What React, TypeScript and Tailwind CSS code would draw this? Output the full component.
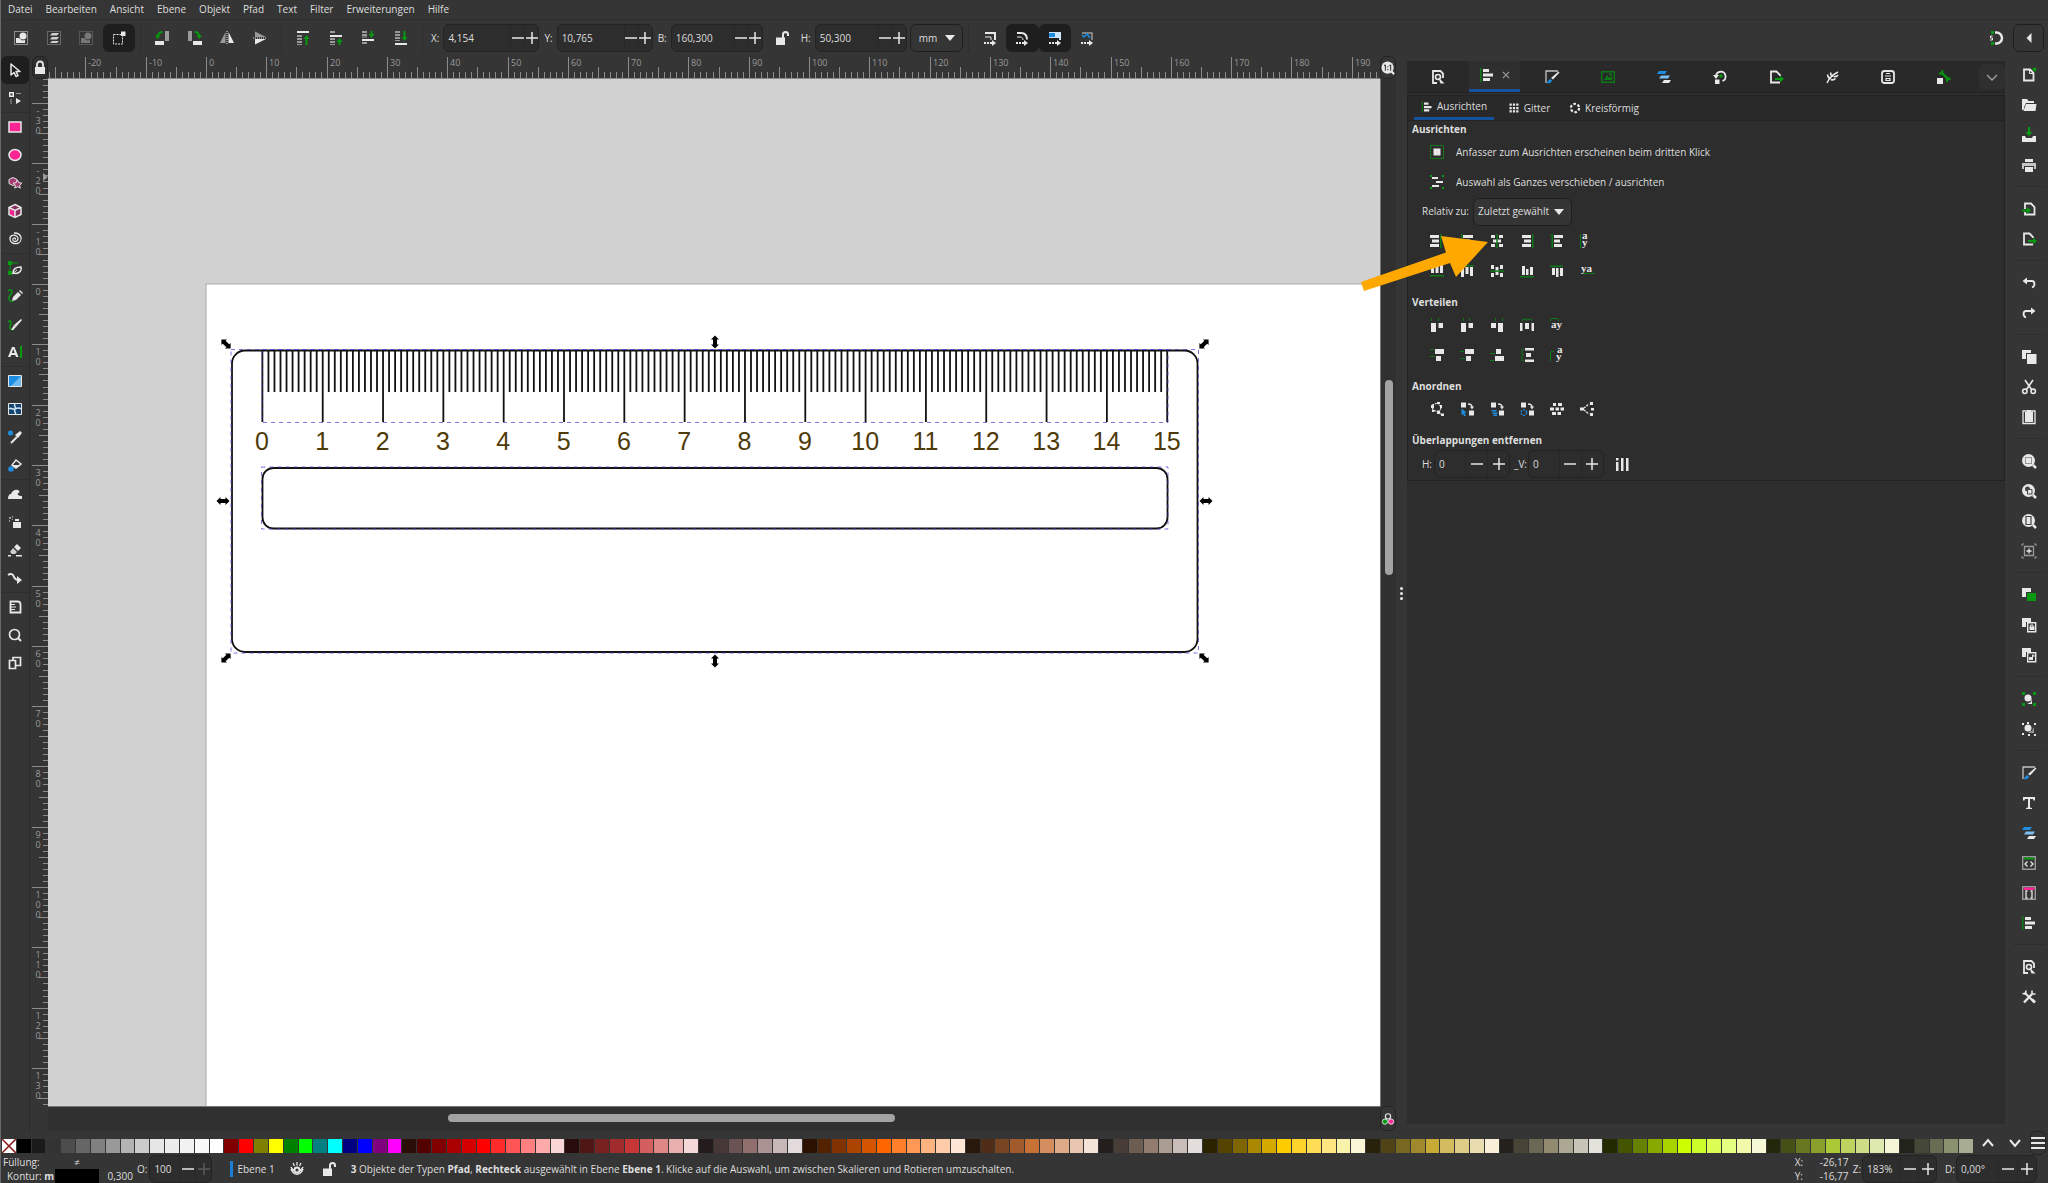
import type { ReactNode } from 'react'
import clsx from 'clsx'

const W = '#e8e8e8'
const G = '#079a10'
const D = '#0b7a16'
const B = '#1c8de0'
const M = '#9a9a9a'
const P = '#ff2494'

const F = ({ d, c = W }: { d: string; c?: string }) => <path d={d} fill={c} fillRule="evenodd" />
const S = ({ d, c = W, w = 1.5, dash }: { d: string; c?: string; w?: number; dash?: string }) => (
  <path d={d} fill="none" stroke={c} strokeWidth={w} strokeDasharray={dash} />
)

const icons: Record<string, ReactNode> = {
  selectAll: <><S d="M1.5 1.5h13v13h-13z" w={1} dash="1 1" /><circle cx="10" cy="6" r="3.5" fill={W} /><F d="M3 8h3l3 2.5 3-.5v3H3z" /></>,
  selectLayers: <><S d="M1.5 1.5h13v13h-13z" c={M} w={1} dash="1 1" /><F d="M6 3h7l-2 2.5H4zM6 7h7l-2 2.5H4zM6 11h7l-2 2H4z" c="#d0d0d0" /></>,
  deselect: <><S d="M1.5 1.5h13v13h-13z" c="#777" w={1} dash="1 1" /><circle cx="10" cy="6" r="3.5" fill="#777" /><F d="M3 8h3l3 2.5 3-.5v3H3z" c="#777" /></>,
  touchSelect: <><S d="M2.5 4.5h9v9.5h-9z" w={1} dash="2 1" /><F d="M10 1.5h4.5V6H10z" /></>,
  rotateLeft: <><F d="M1 11h9v4H1z" /><F d="M11 1h4v10h-4z" c={M} /><S d="M8.5 2C5 2 4 4 3.5 7" c={G} w={2} /><F d="M1 5.5h5.5L3.5 9z" c={G} /></>,
  rotateRight: <><F d="M6 11h9v4H6z" /><F d="M1 1h4v10H1z" c={M} /><S d="M7.5 2C11 2 12 4 12.5 7" c={G} w={2} /><F d="M9.5 5.5H15L12.5 9z" c={G} /></>,
  flipH: <><F d="M6.5 2v11H1z" c={M} /><F d="M9.5 2v11H15z" /><S d="M8 1v14" w={1} dash="1 1" /></>,
  flipV: <><F d="M3 1.5v5.5h11z" c={M} /><F d="M3 14.5V9h11z" /><S d="M1 8h14" w={1} dash="1 1" /></>,
  raiseTop: <><F d="M2 1h12v2H2z" /><F d="M2 5h5v2H2zM2 8h5v2H2zM2 11h5v2H2zM2 14h5v1H2z" c={M} /><F d="M10.5 15V9h-2l3-4 3 4h-2v6z" c={G} /></>,
  raise: <><F d="M2 5h12v2H2z" /><F d="M2 1h5v2H2zM2 8h5v2H2zM2 11h5v2H2zM2 14h5v1H2z" c={M} /><F d="M10.5 15v-3h-2l3-4 3 4h-2v3z" c={G} /></>,
  lower: <><F d="M2 9h12v2H2z" /><F d="M2 1h5v2H2zM2 4h5v2H2zM2 6.5h5v1H2zM2 12h5v2H2z" c={M} /><F d="M10.5 1v3h-2l3 4 3-4h-2V1z" c={G} /></>,
  lowerBottom: <><F d="M2 13h12v2H2z" /><F d="M2 1h5v2H2zM2 4h5v2H2zM2 7h5v2H2zM2 10h5v1H2z" c={M} /><F d="M10.5 1v6h-2l3 4 3-4h-2V1z" c={G} /></>,
  unlock: <><F d="M2 7.5h9V15H2z" /><S d="M9 8V4.5a2.5 2.5 0 0 1 5 0V6" w={2} /></>,
  lock: <><F d="M3 7h10v7H3z" /><S d="M5 8V4.5a3 3 0 0 1 6 0V8" w={1.8} /></>,
  scaleStroke: <><F d="M3 2h11v8h-2V4H3z" /><S d="M3 7h6v3" w={1} /><S d="M2 13h8" w={2} dash="2 1" /><F d="M10 10l4 3-4 3z" /></>,
  scaleCorner: <><S d="M3 3h4c4 0 6 2 6 6.5" w={2} /><S d="M3 7h3c2 0 3 1 3 3" w={1} /><S d="M2 13h8" w={2} dash="2 1" /><F d="M10 10l4 3-4 3z" /></>,
  scaleGradient: <><F d="M2 2h12v8h-2V8H2z" c="#cfe6fa" /><F d="M2 3h6v4H2z" c={B} /><S d="M2 13h8" w={2} dash="2 1" /><F d="M10 10l4 3-4 3z" /></>,
  scalePattern: <><S d="M3 3h10v7" c={M} /><S d="M3 5l2 2 3-3 3 4" c={B} /><S d="M2 13h8" w={2} dash="2 1" /><F d="M10 10l4 3-4 3z" /></>,
  snap: <><S d="M7 2.5h1.5a5.5 5.5 0 0 1 0 11H7" w={2.5} /><F d="M3 1h3v3H3zM3 12h3v3H3z" c={G} /><S d="M4.5 6h-2v2h2v2H2" w={1} /></>,
  back: <F d="M10.5 3v10l-5-5z" />,
  arrow: <path d="M4 2v11l3-2.500 2 4 2-1-2-4h4z" fill="none" stroke={W} strokeWidth="1.5" strokeLinejoin="round" />,
  node: <><F d="M2 2h5v5H2z" /><F d="M9 3h5v1H9zM3.5 9h1v5h-1z" c={M} /><F d="M9 8v6l5-3z" /><F d="M3.5 3.5h2v2h-2z" c="#353535" /></>,
  rect: <path d="M2 3h12v10H2z" fill={P} stroke={W} strokeWidth="1.5" />,
  ellipse: <ellipse cx="8" cy="8" rx="6" ry="5.5" fill={P} stroke={W} strokeWidth="1.5" />,
  star: <><path d="M6 2.5l4 2v4l-4 2-4-2v-4z" fill="#a33a70" stroke={W} /><path d="M10.5 5l1.3 2.7 3 .4-2.1 2 .5 3-2.7-1.4-2.7 1.4.5-3-2.1-2 3-.4z" fill="#a33a70" stroke={W} /></>,
  cube: <><path d="M8 1.5l6 3v7l-6 3-6-3v-7z" fill="#8a2f60" stroke={W} strokeWidth="1.5" /><F d="M3 6l4.5 2v5.5L3 11z" c={P} /><S d="M2 4.5l6 3 6-3M8 7.5v7" /></>,
  spiral: <S d="M8 8.5c1-.8 0-2-1.2-1.5-2 .8-1 3.7 1.500 3.500 3-.2 3.700-4 1.200-5.500C6 3 2.5 5 3 8.500c.5 3 3.500 4.700 7 4 3-.7 4.500-3.500 4-6C13.300 3.500 10.500 2 7 2" w={1.3} />,
  pen: <><F d="M1 1h4v4H1zM1 11h4v4H1z" c={G} /><S d="M3 5v6M5 3h6" c={G} w={1} /><path d="M6 13c0-4 3-6 8-6 1 3-1 6-5 6.5z" fill="none" stroke={W} strokeWidth="1.5" /><S d="M5 14l5-4" w={1} /></>,
  pencil: <><S d="M1 3c2-2 4-1 4 1s-3 3-3 6 2 4 4 3" c={G} /><F d="M5 13l1-4 5-5 3 3-5 5z" /><F d="M12 3l1-1 3 3-1 1z" /></>,
  brush: <><S d="M1 6c2-2 3-1 3 1s-2 3-1 5 3 2 4 1" c={G} /><F d="M14 3l1 1-6 7-2-2z" /><F d="M7 9l2 2-3 3H4z" /></>,
  text: <><F d="M1 13l4-10h2.5l4 10H9l-.8-2h-4l-.8 2zM4.9 9h2.700L6.200 5z" /><F d="M13 2h2v12h-2z" c={G} /></>,
  gradient: <><path d="M1.5 2.5h13v11h-13z" fill={B} stroke={W} /><F d="M14 3v10H4z" c="#6fb9f0" /></>,
  mesh: <><path d="M1.5 2.5h13v11h-13z" fill="#14446e" stroke={W} /><S d="M8 3c-2 2 2 3 0 5s2 4 0 5M2 8c2-2 4 1 6 0s4-2 6 0" c="#cfe6fa" /></>,
  dropper: <><circle cx="3.5" cy="4" r="2.5" fill={B} /><S d="M4 14l6-6" w={2} /><F d="M8 6l5-4 2 2-4 5z" /></>,
  bucket: <><circle cx="4" cy="12" r="2.8" fill={B} /><path d="M9 3l5 4-5 4-4-3z" fill="none" stroke={W} strokeWidth="1.5" /><F d="M5 8h9l-5 3z" /></>,
  tweak: <F d="M1 13c0-3 1-5 3-5 1-3 4-5 7-4 2 1 2 3 0 3-1 2 1 3 4 3v3z" />,
  spray: <><F d="M6 8h8v6H6zM8 5h4v2H8z" /><F d="M2 3h2v2H2zM5 2h1v2H5zM2 6h1v2H2zM5 5h1v1H5z" c={M} /></>,
  eraser: <><F d="M10 2l4 4-3 3-4-4z" /><F d="M6 6l4 4-2 2H5l-2-2z" c="#cfcfcf" /><F d="M1 13h3v1.500H1zM9 13h6v1.500H9z" /></>,
  connector: <><S d="M1 5c3-2 5-1 6 2s3 3 5 3" w={2} /><F d="M10 6l5 4-5 4z" /></>,
  measure: <><path d="M3.5 2.5h7c2 0 3 1 3 3v8h-10z" fill="none" stroke={W} strokeWidth="1.8" /><S d="M4 5.5h4M4 8h5M4 10.5h4" w={1.2} /></>,
  zoom: <><circle cx="7.5" cy="7.5" r="5" fill="none" stroke={W} strokeWidth="1.7" /><S d="M11 11l3 3" w={2} /></>,
  pages: <><path d="M2.5 5.5h6v8h-6z" fill="none" stroke={W} strokeWidth="1.7" /><S d="M6 5V2.5h7.5v8H9" w={1.7} /></>,
  docNew: <><path d="M3 2.5h6L12.5 6v7.5H3z" fill="none" stroke={W} strokeWidth="1.8" /><S d="M8.5 3v3.5H12" w={1} /><circle cx="13.5" cy="2.5" r="2" fill={G} /></>,
  open: <F d="M1 2h5l1.5 2H13v2H5L3.5 9l-1 4H1zM5 7h10.5l-1 7h-12z" />,
  save: <><F d="M1 9h3l1 2h6l1-2h3v6H1z" /><S d="M8 0v7" c={G} w={2} /><F d="M4.5 5h7L8 9z" c={G} /></>,
  print: <><F d="M4 2h8v3H4z" /><F d="M1 6h14v6h-2V9H3v3H1z" c="#c4c4c4" /><F d="M4 10h8v5H4z" /></>,
  docImport: <><path d="M4 8V2.5h6L13.5 6v7.5H4V11" fill="none" stroke={W} strokeWidth="1.8" /><S d="M1 9.5h6" c={G} w={2} /><F d="M6 6l4 3.5L6 13z" c={G} /></>,
  docExport: <><path d="M12 7V6L8.5 2.5H3v11h9" fill="none" stroke={W} strokeWidth="1.8" /><S d="M7 10h6" c={G} w={2} /><F d="M12 6.5l4 3.5-4 3.5z" c={G} /></>,
  undo: <><S d="M5 6h6c3 0 3.5 5 0 6.5" w={1.8} /><F d="M6 2.5v7L1.5 6z" /></>,
  redo: <><S d="M11 6H5c-3 0-3.5 5 0 6.5" w={1.8} /><F d="M10 2.5v7L14.5 6z" /></>,
  duplicate: <><F d="M1 1h9v3H5v6H1z" /><F d="M6 5h9.5v10H6z" /></>,
  cut: <><S d="M4 1l6.5 9.5M12 1l-6.5 9.5" w={1.6} /><circle cx="3.8" cy="12.3" r="2.2" fill="none" stroke={W} strokeWidth="1.6" /><circle cx="12.2" cy="12.3" r="2.2" fill="none" stroke={W} strokeWidth="1.6" /></>,
  paste: <><S d="M2 2h12v12.5H2z" w={1.3} /><F d="M6 1h4v2h2v10H4V3h2z" /></>,
  zoomSel: <><circle cx="7.5" cy="7.5" r="6.5" fill={W} /><S d="M12 12l3 3" w={2.5} /><S d="M4.5 4.5h6v6h-6z" c="#444" w={1} dash="1 1" /></>,
  zoomDraw: <><circle cx="7.5" cy="7.5" r="6.5" fill={W} /><S d="M12 12l3 3" w={2.5} /><circle cx="6.5" cy="6" r="2.5" fill="#444" /><path d="M6.5 6.5H11V11H6.500z" fill={W} stroke="#444" /></>,
  zoomPage: <><circle cx="7.5" cy="7.5" r="6.5" fill={W} /><S d="M12 12l3 3" w={2.5} /><S d="M5 3.5h5v8H5z" c="#444" w={1.2} /></>,
  zoomCenter: <><S d="M3.5 3.5h9v9h-9z" c={M} w={1.3} /><S d="M1 3V1h2M13 1h2v2M15 13v2h-2M3 15H1v-2" c={M} w={1} /><S d="M8 5.5v5M5.5 8h5" w={1.3} /></>,
  dupGreen: <><F d="M1 1h9v4H5v5H1z" /><F d="M6 6h9v8H6z" c={G} /></>,
  cloneLock: <><F d="M1 1h9v4H5v5H1z" /><path d="M6.7 5.7h8v9h-8z" fill="#353535" stroke={W} strokeWidth="1.4" /><F d="M8.5 9.500h5V13h-5z" /><S d="M9.5 10V8H12v2" w={1} /></>,
  cloneUnlock: <><F d="M1 1h9v4H5v5H1z" /><path d="M6.7 5.7h8v9h-8z" fill="#353535" stroke={W} strokeWidth="1.4" /><F d="M8 10h4v3H8z" /><S d="M11.5 10V8H13v2" w={1} /></>,
  group: <><F d="M1 1h3v3H1zM12 1h3v3h-3zM1 12h3v3H1zM12 12h3v3h-3z" c={G} /><circle cx="7" cy="7" r="3.5" fill={W} /><F d="M11 7v6H6l4-2z" /></>,
  ungroup: <><F d="M1 2h2v2H1zM6 1h2v2H6zM13 2h2v2h-2zM1 12h2v2H1zM7 13h2v2H7zM13 13h2v2h-2z" /><circle cx="7" cy="7" r="3.5" fill={W} /><F d="M13 6v6H9l-2-1 4-1z" c={M} /></>,
  fillStroke: <><S d="M2 14V2h12" w={1.3} c="#c4c4c4" /><F d="M14.5 2.5l1 1-6.500 7L7 9z" /><F d="M6 10l2 1.5c-1 3-3 3-5.500 2.500C4 13 4 11 6 10z" c={B} /></>,
  bigT: <F d="M2 2h12v3.5h-1.5L12 4H9v8.500l2 .5v1H5v-1l2-.5V4H4l-.5 1.5H2z" />,
  layers: <><F d="M3 2h8L9 5H1z" c={B} /><F d="M5 6.5h9l-2 3H3z" c="#7fc0f2" /><F d="M8 11h7l-2 3H6z" /></>,
  xml: <><path d="M1.7 1.7h12.6v12.6H1.7z" fill="none" stroke={M} strokeWidth="1.4" /><F d="M3 2.5h10v2H3z" c={G} /><S d="M6.5 6.5L4 9l2.5 2.5M9.5 6.5L12 9l-2.500 2.500" w={1.3} /></>,
  selectors: <><path d="M1.7 1.7h12.6v12.6H1.7z" fill="none" stroke={M} strokeWidth="1.4" /><F d="M2.5 2.5h11V5h-11z" c={P} /><S d="M6.5 6H5v7h1.5M9.5 6H11v7H9.500" w={1.3} /></>,
  align: <><F d="M1 1h1.5v14H1z" c={D} /><F d="M4 2h6v3H4zM4 6.5h10v3H4zM4 11h7v3H4z" /></>,
  docProps: <><path d="M13 9V4.5L10.5 2H3v12h4" fill="none" stroke={W} strokeWidth="1.8" /><circle cx="8" cy="8" r="2.5" fill="none" stroke={W} strokeWidth="1.6" /><F d="M8 8l6.5 6.5h-4z" /></>,
  prefs: <><S d="M3.5 3.5L13 13" w={2} /><S d="M11 5l-8 8.5" w={2.4} /><S d="M1.500 4.5l3 .5L5 1.5M14.500 5H11V1.5" w={1.6} /><F d="M10 11l2-1.5 3 3-2 2z" /></>,
  image: <><path d="M1.7 2.7h12.6v10.6H1.7z" fill="none" stroke={D} strokeWidth="1.4" /><F d="M4 11l3-5 2 3 3-2v4z" c={D} /><circle cx="10.5" cy="5.5" r="1.2" fill={D} /></>,
  transform: <><S d="M4 8V7a4.8 4.8 0 1 1 6.5 5" w={1.8} /><F d="M1 6h6l-3 4z" /><F d="M3 10.5h4.5V15H3z" /><F d="M7.5 5.5h3v3h-3z" c={G} /></>,
  symbols: <><S d="M3 14c2-5 5-8 11-11" w={1.4} /><S d="M3.5 5.5c.5 3 1.5 4 3.5 4M6.500 3.500c.5 3 1 4 3 3.500M7 10.500c2 1 3 .5 4.500-1M10 7.500c2 .5 3 0 4-1.500" w={1.6} /></>,
  preview: <><rect x="2" y="2" width="12" height="12" rx="2.5" fill="none" stroke={W} strokeWidth="1.8" /><S d="M6 4.5h4M5 7h6M6 9.5h4v2H6z" w={1.2} /></>,
  objProps: <><F d="M1 9h6v6H1z" /><S d="M5.5 3.5l6 6 3 .5" c={G} w={2.4} /><S d="M3 4.5h3L6.500 1M11 13V9.5" c={G} w={1.8} /></>,
  gridIcon: <F d="M2 2h3v3H2zM6.5 2h3v3h-3zM11 2h3v3h-3zM2 6.5h3v3H2zM6.5 6.5h3v3h-3zM11 6.5h3v3h-3zM2 11h3v3H2zM6.5 11h3v3h-3zM11 11h3v3h-3z" />,
  circular: <circle cx="8" cy="8" r="5.5" fill="none" stroke={W} strokeWidth="3" strokeDasharray="3.5 2.26" />,
  handles: <><S d="M1.5 1.5h13v13h-13z" c={G} w={1} dash="2 1" /><F d="M4.5 4.5h7v7h-7z" /></>,
  moveGroup: <><F d="M1 1h2v2H1zM13 1h2v2h-2zM1 13h2v2H1zM13 13h2v2h-2z" c={G} /><F d="M3 3h6v2H3zM7 7h7v2H7zM3 11h7v2H3z" /></>,
  aR: <><F d="M1 2h9v3H1zM3 6.5h7v3H3zM1 11h9v3H1z" /><F d="M11 1h1.5v14H11z" c={D} /></>,
  aL: <><F d="M4 2h10v3H4zM4 6.5h7v3H4zM4 11h9v3H4z" /><F d="M2 1h1.5v14H2z" c={D} /></>,
  aC: <><F d="M2 2h4v3H2zM10 2h4v3h-4zM4 6.5h8v3H4zM2 11h4v3H2zM10 11h4v3h-4z" /><F d="M7.3 1h1.5v14H7.3z" c={D} /></>,
  aRin: <><F d="M3 2h9v3H3zM5 6.5h7v3H5zM3 11h9v3H3z" /><F d="M13 1h1.5v14H13z" c={D} /></>,
  aLout: <><F d="M5 2h9v3H5zM5 6.5h6v3H5zM5 11h8v3H5z" /><F d="M2.5 1H4v14H2.5zM1 2h1v1H1z" c={D} /></>,
  bR: <><F d="M2 1v9h3V1zM6.5 3v7h3V3zM11 1v9h3V1z" /><F d="M1 12h14v1.5H1z" c={D} /></>,
  bL: <><F d="M2 4v10h3V4zM6.5 4v7h3V4zM11 4v9h3V4z" /><F d="M1 2h14v1.5H1z" c={D} /></>,
  bC: <><F d="M2 2h3v4H2zM11 2h3v4h-3zM6.5 4h3v8h-3zM2 10h3v4H2zM11 10h3v4h-3z" /><F d="M1 7.3h14v1.5H1z" c={D} /></>,
  bRin: <><F d="M3 3v9h3V3zM7 6v6h2.5V6zM11 4v8h3V4z" /><F d="M1 13h14v1.5H1z" c={D} /></>,
  bLout: <><F d="M3 5v7h3V5zM7 5v9h2.5V5zM11 5v8h3V5z" /><F d="M1 2.5h13V4H1z" c={D} /></>,
  dL: <><F d="M2 6h5v9H2zM9.5 6H14v5H9.5z" /><F d="M2 1h1v3H2zM9 1h1v3H9z" c={D} /></>,
  dC: <><F d="M2 6h5v9H2zM9.5 6H14v5H9.5z" /><F d="M4 1h1v3H4zM10 1h1v3h-1z" c={D} /></>,
  dR: <><F d="M2 6h5v5H2zM9 6h5v9H9z" /><F d="M6 1h1v3H6zM13 1h1v3h-1z" c={D} /></>,
  dG: <><F d="M1 6h2.5v8H1zM6 6h4v6H6zM12.5 6H15v8h-2.5z" /><F d="M3 2h10v1H3zM3 1h1v3H3zM7 1h1v3H7zM12 1h1v3h-1z" c={D} /></>,
  eL: <><F d="M6 2h9v5H6zM7 9h5v5H7z" /><F d="M1 2h4v1H1zM1 9h5v1H1z" c={D} /></>,
  eC: <><F d="M6 2h9v5H6zM7 9h5v5H7z" /><F d="M1 4h4v1H1zM1 11h5v1H1z" c={D} /></>,
  eR: <><F d="M7 2h5v5H7zM6 9h9v5H6z" /><F d="M1 6h5v1H1zM1 13h4v1H1z" c={D} /></>,
  eG: <><F d="M6 1h9v2.5H6zM7 6h5v4H7zM6 12.5h9V15H6z" /><F d="M2.5 2h1v12h-1zM2 2h3v1H2zM2 7h3v1H2zM2 13h3v1H2z" c={D} /></>,
  graph: <><S d="M3 4l6-2 3 4-1 4M3 4l1 5 5 2 4 3" w={1.2} dash="2 1" /><F d="M2 4h3v3H2zM8 1h3v2H8zM11 4h2v3h-2zM3 9h2v2H3zM8 9.5h3V13H8zM12 12.5h3V15h-3z" /></>,
  swap1: <><F d="M2 1.5h5v5H2zM10 9.5h5v5h-5z" /><S d="M9 3c3 0 4 1 4 3" w={1.3} /><F d="M11 5.5h4l-2 3z" /><F d="M2.5 7.5l5 4-2 .5L7 15H5l-1-2-1.5 1z" c={B} /></>,
  swap2: <><F d="M2 1.5h5v5H2zM10 9.5h5v5h-5z" /><S d="M9 3c3 0 4 1 4 3" w={1.3} /><F d="M11 5.5h4l-2 3z" /><F d="M3 9h5l-1 1.5H2zM4 11.5h5L8 13H3zM5 13.5h3V15H4z" c={B} /></>,
  swap3: <><F d="M2 1.5h5v5H2zM10 9.5h5v5h-5z" /><S d="M9 3c3 0 4 1 4 3" w={1.3} /><F d="M11 5.5h4l-2 3z" /><circle cx="4.8" cy="11.5" r="2.8" fill="none" stroke={B} strokeWidth="1.3" strokeDasharray="2 1" /></>,
  random: <F d="M4 2h3v3H4zM9 2h4v3H9zM1 6.5h4v3H1zM6.5 6.5H10v3H6.5zM11.5 6.5H15v3h-3.5zM3 11h4v3H3zM8.5 11H12v3H8.5z" />,
  unclump: <><F d="M1 6.5h4v3H1zM11 1h3v3h-3zM12 7h3v2.5h-3zM11 12h3v3h-3z" /><S d="M5 7l5-4M5 9l5 4" w={1.3} dash="2 1" /></>,
  bars: <F d="M2 2h2.5v2.5H2zM2 6h2.5v9H2zM7 2h2.5v13H7zM12 2h2.5v13H12z" />,
  eye: <><path d="M2 6c3 6 9 6 12 0M2 8c3 7 9 7 12 0" fill="none" stroke={W} strokeWidth="1.5" /><circle cx="8" cy="9" r="2.5" fill="#353535" stroke={W} strokeWidth="1.8" /><S d="M4 2l1.5 3M12 2l-1.500 3M8 1v3.5" w={1.3} /></>,
  oneToOne: <><circle cx="7.5" cy="7.5" r="7" fill={W} /><S d="M12 12l3 3" w={2.5} /><S d="M3.5 5H5v6M9.5 5H11v6M7.8 6v1.5M7.8 9v1.5" c="#333" w={1.2} /></>,
  colorManage: <><circle cx="8" cy="5" r="3" fill="none" stroke={W} strokeWidth="1.3" /><circle cx="4.5" cy="11" r="3" fill={G} stroke={W} /><circle cx="11.5" cy="11" r="3" fill={P} stroke={W} /></>,
  up: <S d="M3 11l5-6 5 6" w={2} />,
  down: <S d="M3 5l5 6 5-6" w={2} />,
  downThin: <S d="M3 6l5 5 5-5" c={M} />,
  menu: <F d="M1 2h14v2H1zM1 7h14v2H1zM1 12h14v2H1z" />,
  close: <S d="M3 3l10 10M13 3L3 13" c={M} w={2} />,
}

const Icon = ({ name, className = 'size-4' }: { name: string; className?: string }) => (
  <svg viewBox="0 0 16 16" className={clsx('shrink-0', className)} aria-hidden="true">
    {icons[name]}
  </svg>
)

const IconButton = ({ icon, active, className }: { icon: string; active?: boolean; className?: string }) => (
  <button
    type="button"
    aria-label={icon}
    className={clsx('flex items-center justify-center rounded-md', active && 'bg-[#1e1e1e]', className)}
  >
    <Icon name={icon} />
  </button>
)

type SpinProps = {
  id: string
  label: string
  value: string
  width: string
  cell?: string
  gap?: string
  plusOff?: boolean
}

const Spin = ({ id, label, value, width, cell = 'w-3.5', gap = 'gap-1', plusOff }: SpinProps) => (
  <div className={clsx('flex items-center', gap)}>
    <label htmlFor={id}>{label}</label>
    <div className={clsx('flex h-7 items-stretch rounded-md border border-[#232323] bg-[#2d2d2d]', width)}>
      <input id={id} defaultValue={value} className="w-0 flex-1 bg-transparent pl-1 outline-none" />
      <button type="button" aria-label={`${label} -`} className={clsx('flex items-center justify-center border-l border-[#282828]', cell)}>
        <svg viewBox="0 0 14 14" className="size-3.5 shrink-0"><S d="M1 7h12" /></svg>
      </button>
      <button type="button" aria-label={`${label} +`} className={clsx('flex items-center justify-center border-l border-[#282828]', cell)}>
        <svg viewBox="0 0 14 14" className="size-3.5 shrink-0"><S d="M1 7h12M7 1v12" c={plusOff ? '#5a5a5a' : W} /></svg>
      </button>
    </div>
  </div>
)

const Select = ({ id, value, className }: { id: string; value: string; className: string }) => (
  <div className="relative">
    <select id={id} aria-label={value} defaultValue={value} className={clsx('h-7 appearance-none rounded-md border border-[#1f1f1f] bg-[#353535] outline-none', className)}>
      <option>{value}</option>
    </select>
    <svg viewBox="0 0 10 6" className="pointer-events-none absolute top-[11px] right-2 h-1.5 w-2.5"><F d="M0 0h10L5 6z" /></svg>
  </div>
)

const menus = ['Datei', 'Bearbeiten', 'Ansicht', 'Ebene', 'Objekt', 'Pfad', 'Text', 'Filter', 'Erweiterungen', 'Hilfe']

const toolGroups = [
  ['arrow', 'node'],
  ['rect', 'ellipse', 'star', 'cube', 'spiral'],
  ['pen', 'pencil', 'brush', 'text'],
  ['gradient', 'mesh', 'dropper', 'bucket'],
  ['tweak', 'spray', 'eraser', 'connector'],
  ['measure', 'zoom', 'pages'],
]

const commandGroups = [
  ['docNew', 'open', 'save', 'print'],
  ['docImport', 'docExport'],
  ['undo', 'redo'],
  ['duplicate', 'cut', 'paste'],
  ['zoomSel', 'zoomDraw', 'zoomPage', 'zoomCenter'],
  ['dupGreen', 'cloneLock', 'cloneUnlock'],
  ['group', 'ungroup'],
  ['fillStroke', 'bigT', 'layers', 'xml', 'selectors', 'align'],
  ['docProps', 'prefs'],
]

const palette = (
  '000000 1a1a1a 333333 4d4d4d 666666 808080 999999 b3b3b3 cccccc e6e6e6 ececec f2f2f2 f9f9f9 ffffff ' +
  '800000 ff0000 808000 ffff00 008000 00ff00 008080 00ffff 000080 0000ff 800080 ff00ff ' +
  '2b0d08 550000 800000 aa0000 d40000 ff0000 ff2a2a ff5555 ff8080 ffaaaa f9d5d5 ' +
  '280b0b 501616 782121 a02c2c c83737 d35f5f de8787 e9afaf f4d7d7 ' +
  '241c1c 483737 6c5353 916f6f ac9393 c8b7b7 e3dbdb ' +
  '2b1100 552200 803300 aa4400 d45500 ff6600 ff7f2a ff9955 ffb380 ffccaa ffe6d5 ' +
  '28170b 502d16 784421 a05a2c c87137 d38d5f deaa87 e9c6af f4e3d7 ' +
  '241f1c 483e37 6c5d53 917c6f ac9d93 c8beb7 e3dedb ' +
  '2b2200 554400 806600 aa8800 d4aa00 ffcc00 ffd42a ffdd55 ffe680 f9f2aa f9f6d5 ' +
  '28220b 504416 786721 a0892c c8ab37 d3bc5f decd87 e9ddaf f9eed7 ' +
  '24201c 484537 6c6753 918a6f aca793 c8c4b7 e3e2db ' +
  '222b00 445500 668000 88aa00 aad400 ccff00 ccff2a ddff55 e5ff80 f2f9aa f6f9d5 ' +
  '23280b 445016 677821 89a02c abc837 bcd35f cdde87 dde9af f4f6d7 ' +
  '22241c 454837 676c53 8a916f a7ac93'
).split(' ')

// one millimetre on screen, and the page corner inside the canvas
const MM = 6.03
const PAGE_X = 158
const PAGE_Y = 205

const range = (from: number, to: number) => Array.from({ length: to - from + 1 }, (_, i) => from + i)

const HRuler = () => (
  <svg className="h-full w-full">
    {range(-26, 260).map((n) => {
      const x = Math.round(PAGE_X + n * MM) + 0.5
      const top = n % 10 === 0 ? 1 : n % 5 === 0 ? 11 : 16
      return <path key={n} d={`M${x} ${top}V23`} stroke="#8c8c8c" />
    })}
    {range(-2, 19).map((n) => (
      <text key={n} x={Math.round(PAGE_X + n * 10 * MM) + 3} y="10" fill="#9a9a9a" className="text-[9px]">
        {n * 10}
      </text>
    ))}
    <path d="M0 22.5H4000" stroke="#8c8c8c" />
  </svg>
)

const VRuler = () => (
  <svg className="h-full w-full">
    {range(-34, 200).map((n) => {
      const y = Math.round(PAGE_Y + n * MM) + 0.5
      const left = n % 10 === 0 ? 2 : n % 5 === 0 ? 9 : 13
      return <path key={n} d={`M${left} ${y}H18`} stroke="#8c8c8c" />
    })}
    {range(-3, 13).map((n) =>
      String(n * 10).split('').map((ch, i) => (
        <text key={`${n}-${i}`} x="8" y={Math.round(PAGE_Y + n * 10 * MM) + 11 + i * 10} textAnchor="middle" fill="#9a9a9a" className="text-[9px]">
          {ch}
        </text>
      ))
    )}
    <F d="M13 94v8l5-4z" c={M} />
  </svg>
)

const DoubleArrow = ({ x, y, angle }: { x: number; y: number; angle: number }) => (
  <path transform={`translate(${x} ${y}) rotate(${angle})`} d="M-6.5 0l4-4v2h5v-2l4 4-4 4v-2h-5v2z" fill="#000" />
)

const Drawing = () => (
  <svg className="h-full w-full bg-[#d1d1d1]">
    <rect x={PAGE_X} y={PAGE_Y} width="1400" height="2000" fill="#fff" stroke="#a9a9a9" />
    <g fill="none" stroke="#111" strokeWidth="1.8">
      <rect x="184" y="271.5" width="965.5" height="301.5" rx="13" />
      <rect x="214.5" y="389" width="905" height="60.5" rx="11" />
      {range(0, 150).map((n) => (
        <path key={n} d={`M${214.4 + n * 6.032} 271V${n % 10 === 0 ? 343 : 313}`} />
      ))}
    </g>
    <g fill="none" stroke="#4a4ad8" strokeDasharray="4 4" opacity="0.75">
      <path d="M183 270.5h967.5V574H183zM214 270.5h906v73H214zM213.5 388H1120v62H213.5z" />
    </g>
    {range(0, 15).map((n) => (
      <text key={n} x={214 + n * 60.32} y="371" textAnchor="middle" fill="#4f3a0a" className="font-['Liberation_Sans',sans-serif] text-[25px]">
        {n}
      </text>
    ))}
    <DoubleArrow x={178} y={265} angle={45} />
    <DoubleArrow x={1156} y={265} angle={-45} />
    <DoubleArrow x={178} y={579} angle={-45} />
    <DoubleArrow x={1156} y={579} angle={45} />
    <DoubleArrow x={175} y={422} angle={0} />
    <DoubleArrow x={1158} y={422} angle={0} />
    <DoubleArrow x={667} y={263} angle={90} />
    <DoubleArrow x={667} y={582} angle={90} />
  </svg>
)

const IconRow = ({ names, glyph }: { names: string[]; glyph?: ReactNode }) => (
  <div className="flex pl-2.5">
    {names.map((name) => (
      <IconButton key={name} icon={name} className="h-[30px] w-[30px]" />
    ))}
    {glyph}
  </div>
)

const TextGlyph = ({ label, children }: { label: string; children: ReactNode }) => (
  <button type="button" aria-label={label} className="flex h-[30px] w-[30px] items-center justify-center">
    <svg viewBox="0 0 16 16" className="size-4 overflow-visible font-['Liberation_Serif',serif] text-[11px] font-bold" fill={W}>{children}</svg>
  </button>
)

const dockTabs = ['fillStroke', 'image', 'layers', 'transform', 'docExport', 'symbols', 'preview', 'objProps']

const Heading = ({ children }: { children: ReactNode }) => <h2 className="mt-2 h-4 leading-4 font-bold">{children}</h2>

const AlignPanel = () => (
  <section className="border border-[#222] bg-[#2d2d2d]">
    <div className="flex h-[25px] border-b border-[#232323] bg-[#292929] pl-1.5">
      <button type="button" className="flex w-20 items-center justify-center gap-1 border-b-3 border-[#15539e]"><Icon name="align" className="size-3" />Ausrichten</button>
      <button type="button" className="flex w-[70px] items-center justify-center gap-1"><Icon name="gridIcon" className="size-3" />Gitter</button>
      <button type="button" className="flex w-20 items-center justify-center gap-1"><Icon name="circular" className="size-3" />Kreisförmig</button>
    </div>
    <div className="pl-1">
      <h2 className="h-4 leading-4 font-bold">Ausrichten</h2>
      <button type="button" className="flex h-[30px] items-center gap-2.5 pl-4"><span className="w-[18px] pl-px"><Icon name="handles" /></span>Anfasser zum Ausrichten erscheinen beim dritten Klick</button>
      <button type="button" className="flex h-[30px] items-center gap-2.5 pl-4"><span className="w-[18px] pl-px"><Icon name="moveGroup" /></span>Auswahl als Ganzes verschieben / ausrichten</button>
      <div className="flex h-[29px] items-center gap-1 pl-2.5">
        <label htmlFor="relative">Relativ zu:</label>
        <Select id="relative" value="Zuletzt gewählt" className="w-[99px] pl-1" />
      </div>
      <IconRow names={['aR', 'aL', 'aC', 'aRin', 'aLout']} glyph={<TextGlyph label="Textanker vertikal"><F d="M1 1h1v14H1z" c={D} /><text x="3" y="6">a</text><text x="3" y="13">y</text></TextGlyph>} />
      <IconRow names={['bR', 'bL', 'bC', 'bRin', 'bLout']} glyph={<TextGlyph label="Textanker horizontal"><F d="M4 10h12v1H4z" c={D} /><text x="2" y="9">ya</text></TextGlyph>} />
      <Heading>Verteilen</Heading>
      <IconRow names={['dL', 'dC', 'dR', 'dG']} glyph={<TextGlyph label="Text verteilen horizontal"><F d="M1 1h9v1H1zM1 1h1v3H1zM9 1h1v3H9z" c={D} /><text x="2" y="11">ay</text></TextGlyph>} />
      <IconRow names={['eL', 'eC', 'eR', 'eG']} glyph={<TextGlyph label="Text verteilen vertikal"><F d="M1 4h1v10H1zM1 4h4v1H1z" c={D} /><text x="8" y="6">a</text><text x="7" y="13">y</text></TextGlyph>} />
      <Heading>Anordnen</Heading>
      <IconRow names={['graph', 'swap1', 'swap2', 'swap3', 'random', 'unclump']} />
      <Heading>Überlappungen entfernen</Heading>
      <div className="flex h-8 items-center gap-1 pl-2.5">
        <Spin id="gap-h" label="H:" value="0" width="w-[76px]" cell="w-[22px]" gap="gap-0.5" />
        <Spin id="gap-v" label="_V:" value="0" width="w-[76px]" cell="w-[22px]" gap="gap-px" />
        <IconButton icon="bars" className="h-8 w-7" />
      </div>
    </div>
  </section>
)

const Divider = () => <div className="mx-[5px] h-7 w-px bg-[#2e2e2e]" />

const App = () => (
  <div className="relative flex h-screen flex-col overflow-hidden border-l border-[#6a6a6a] bg-[#353535] font-['Open_Sans',sans-serif] text-[10px] text-[#dedede]">
    <nav className="flex h-5 shrink-0 items-center gap-[13px] border-b border-[#2e2e2e] pl-[7px]">
      {menus.map((m) => (
        <button type="button" key={m}>{m}</button>
      ))}
    </nav>

    <div className="flex h-9 shrink-0 items-center pl-1">
      <div className="flex w-[130px]">
        <IconButton icon="selectAll" className="h-7 flex-1" />
        <IconButton icon="selectLayers" className="h-7 flex-1" />
        <IconButton icon="deselect" className="h-7 flex-1" />
        <IconButton icon="touchSelect" active className="h-7 flex-1" />
      </div>
      <Divider />
      <div className="flex w-[130px]">
        {['rotateLeft', 'rotateRight', 'flipH', 'flipV'].map((n) => <IconButton key={n} icon={n} className="h-7 flex-1" />)}
      </div>
      <Divider />
      <div className="flex w-[130px]">
        {['raiseTop', 'raise', 'lower', 'lowerBottom'].map((n) => <IconButton key={n} icon={n} className="h-7 flex-1" />)}
      </div>
      <Divider />
      <div className="flex items-center gap-[5px] pl-[3px]">
        <Spin id="x" label="X:" value="4,154" width="w-24" />
        <Spin id="y" label="Y:" value="10,765" width="w-24" />
        <Spin id="b" label="B:" value="160,300" width="w-[92px]" />
        <IconButton icon="unlock" className="h-7 w-7" />
        <Spin id="h" label="H:" value="50,300" width="w-[92px]" />
      </div>
      <div className="pl-[3px]"><Select id="unit" value="mm" className="w-[53px] pl-2" /></div>
      <Divider />
      <div className="flex w-[130px]">
        <IconButton icon="scaleStroke" className="h-7 flex-1" />
        <IconButton icon="scaleCorner" active className="h-7 flex-1" />
        <IconButton icon="scaleGradient" active className="h-7 flex-1" />
        <IconButton icon="scalePattern" className="h-7 flex-1" />
      </div>
      <div className="ml-auto flex items-center pr-1">
        <IconButton icon="snap" className="h-7 w-[34px]" />
        <IconButton icon="back" className="h-7 w-[31px] border border-[#1f1f1f]" />
      </div>
    </div>

    <main className="flex min-h-0 flex-1">
      <aside className="flex w-[29px] shrink-0 flex-col border-r border-[#2a2a2a]">
        {toolGroups.map((group) => (
          <div key={group[0]} className="flex flex-col border-b border-[#2e2e2e] last:border-0">
            {group.map((name) => (
              <IconButton key={name} icon={name} active={name === 'arrow'} className="h-7 w-7" />
            ))}
          </div>
        ))}
      </aside>

      <div className="grid min-w-0 flex-1 grid-cols-[18px_minmax(0,1fr)_16px] grid-rows-[23px_minmax(0,1fr)_25px]">
        <div className="ml-0.5 flex items-center justify-center rounded-md border border-[#232323] bg-[#303030]"><Icon name="lock" className="size-4" /></div>
        <HRuler />
        <div className="flex items-center justify-center rounded-md border border-[#232323]"><Icon name="oneToOne" className="size-3.5" /></div>
        <VRuler />
        <Drawing />
        <div className="flex justify-center border-l border-[#777] bg-[#303030] pt-[301px]">
          <div className="h-[195px] w-2 rounded-full bg-[#a3a3a3]" />
        </div>
        <div />
        <div className="flex items-start border-t border-[#777] bg-[#303030] pt-[7px] pl-[30%]">
          <div className="h-2 w-[48%] rounded-full bg-[#a3a3a3]" />
        </div>
        <div className="flex items-center justify-center rounded-md border border-[#232323]"><Icon name="colorManage" className="size-3.5" /></div>
      </div>

      <div className="flex w-[11px] shrink-0 flex-col items-center justify-center gap-0.5">
        {[0, 1, 2].map((n) => <span key={n} className="size-[3px] rounded-full bg-[#e8e8e8]" />)}
      </div>

      <aside className="flex w-[598px] shrink-0 flex-col pt-[5px] pb-[7px]">
        <div className="flex h-8 shrink-0 items-center border-b border-[#232323] bg-[#292929]">
          <IconButton icon="docProps" className="h-full w-[62px]" />
          <div className="flex h-full w-[51px] items-center justify-center gap-1.5 border-b-3 border-[#15539e] bg-[#2f2f2f]">
            <Icon name="align" /><Icon name="close" className="size-2.5" />
          </div>
          <div className="flex h-full pl-1">
            {dockTabs.map((n) => <IconButton key={n} icon={n} className="h-full w-14" />)}
          </div>
          <IconButton icon="downThin" className="ml-auto h-[26px] w-[26px] bg-[#2f2f2f]" />
        </div>
        <div className="flex-1 bg-[#2d2d2d] pt-0.5">
          <AlignPanel />
        </div>
      </aside>

      <aside className="flex w-[43px] shrink-0 flex-col items-center pt-1 pl-1">
        {commandGroups.map((group) => (
          <div key={group[0]} className="mb-[7px] flex flex-col border-b border-[#2e2e2e] pb-1.5 last:border-0">
            {group.map((name) => (
              <IconButton key={name} icon={name} className="h-[30px] w-8" />
            ))}
          </div>
        ))}
      </aside>
    </main>

    <div className="flex h-6 shrink-0 items-center pl-px">
      <div className="flex min-w-0 flex-1 gap-px pt-1.5">
        <button type="button" aria-label="Keine Farbe" className="h-3.5 flex-1 bg-white">
          <svg viewBox="0 0 14 14" preserveAspectRatio="none" className="h-full w-full"><S d="M0 0l14 14M14 0L0 14" c="#8b1a1a" /></svg>
        </button>
        {palette.map((c, i) => (
          <button type="button" key={i} aria-label={`#${c}`} className="h-3.5 flex-1" style={{ backgroundColor: `#${c}` }} />
        ))}
      </div>
      <IconButton icon="up" className="h-6 w-[27px]" />
      <IconButton icon="down" className="h-6 w-[27px]" />
      <IconButton icon="menu" className="mx-0.5 h-6 w-4 border border-[#232323]" />
    </div>

    <footer className="flex h-7 shrink-0 items-center">
      <div className="grid h-full w-[132px] grid-cols-[52px_44px_1fr] grid-rows-2 items-center pl-0.5 leading-[14px]">
        <span>Füllung:</span>
        <span className="text-center">≠</span>
        <span />
        <span className="pl-1">Kontur: <b>m</b></span>
        <span className="h-full bg-black" />
        <span className="text-right">0,300</span>
      </div>
      <div className="pl-1"><Spin id="opacity" label="O:" value="100" width="w-[63px]" cell="w-4" plusOff gap="gap-0.5" /></div>
      <div className="ml-[18px] h-4 w-[3px] bg-[#1c7fd6]" />
      <span className="pl-1">Ebene 1</span>
      <IconButton icon="eye" className="ml-1.5 h-7 w-8" />
      <IconButton icon="unlock" className="h-7 w-8" />
      <p className="pl-1.5">
        <b>3</b> Objekte der Typen <b>Pfad</b>, <b>Rechteck</b> ausgewählt in Ebene <b>Ebene 1</b>. Klicke auf die Auswahl, um zwischen Skalieren und Rotieren umzuschalten.
      </p>
      <div className="ml-auto flex items-center gap-2 pr-[11px]">
        <div className="grid w-[50px] grid-cols-2 leading-[14px]">
          <span>X:</span><span className="text-right">-26,17</span>
          <span>Y:</span><span className="text-right">-16,77</span>
        </div>
        <Spin id="zoom" label="Z:" value="183%" width="w-[75px]" cell="w-[18px]" gap="gap-px" />
        <Spin id="rotation" label="D:" value="0,00°" width="w-[81px]" cell="w-[19px]" gap="gap-px" />
      </div>
    </footer>

    <svg viewBox="0 0 128 56" className="pointer-events-none absolute top-[236px] right-[559px] h-14 w-32">
      <path d="M0 46l85-29.5L80 0l47 6-32 35-6-14L3 55z" fill="#ffa900" />
    </svg>
  </div>
)

export default App
